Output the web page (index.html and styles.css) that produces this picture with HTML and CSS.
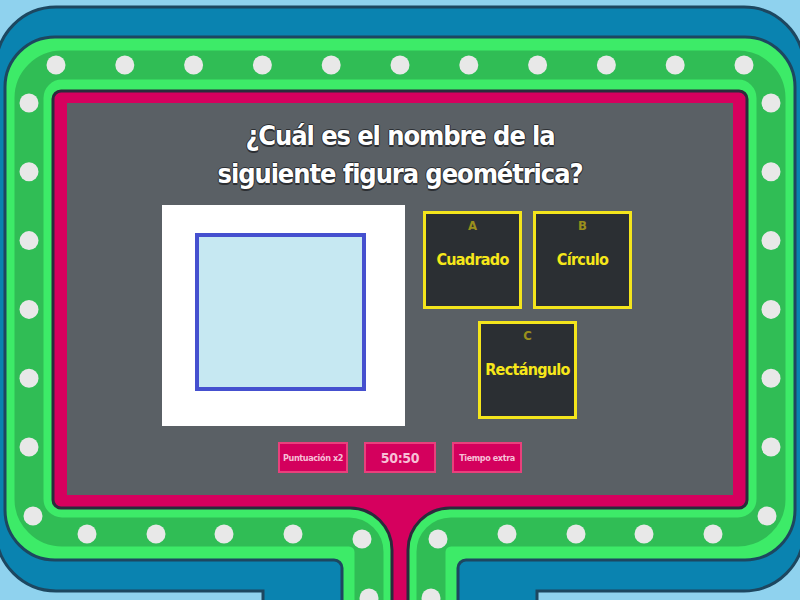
FILE: index.html
```html
<!DOCTYPE html>
<html lang="es">
<head>
<meta charset="utf-8">
<title>Quiz</title>
<link rel="stylesheet" href="styles.css">
</head>
<body>
<div class="stage">
  <svg class="backdrop" width="800" height="600" viewBox="0 0 800 600" aria-hidden="true">
    <rect x="0" y="0" width="800" height="600" fill="#8fd2ee"/>
    <path d="M56,7 H744 A60 60 0 0 1 804,67 V531 A60 60 0 0 1 744,591 H537 V610 H263 V591 H56 A60 60 0 0 1 -4,531 V67 A60 60 0 0 1 56,7 Z" fill="#0a83b0" stroke="#1d4760" stroke-width="3"/>
    <path d="M55,37 H745 A50 50 0 0 1 795,87 V510 A50 50 0 0 1 745,560 H466 A8 8 0 0 0 458,568 V610 H342 V568 A8 8 0 0 0 334,560 H55 A50 50 0 0 1 5,510 V87 A50 50 0 0 1 55,37 Z" fill="#3deb68" stroke="#1d4760" stroke-width="3"/>
    <path d="M369,610 V552 A20 20 0 0 0 349,532 H62 A33 33 0 0 1 29,499 V98 A33 33 0 0 1 62,65 H738 A33 33 0 0 1 771,98 V499 A33 33 0 0 1 738,532 H451 A20 20 0 0 0 431,552 V610" fill="none" stroke="#30bd55" stroke-width="29"/>
    <g fill="#e8e8e8">
      <circle cx="56" cy="65" r="9.5"/><circle cx="124.8" cy="65" r="9.5"/><circle cx="193.6" cy="65" r="9.5"/><circle cx="262.4" cy="65" r="9.5"/><circle cx="331.2" cy="65" r="9.5"/><circle cx="400" cy="65" r="9.5"/><circle cx="468.8" cy="65" r="9.5"/><circle cx="537.6" cy="65" r="9.5"/><circle cx="606.4" cy="65" r="9.5"/><circle cx="675.2" cy="65" r="9.5"/><circle cx="744" cy="65" r="9.5"/>
      <circle cx="29" cy="103" r="9.5"/><circle cx="29" cy="171.8" r="9.5"/><circle cx="29" cy="240.6" r="9.5"/><circle cx="29" cy="309.4" r="9.5"/><circle cx="29" cy="378.2" r="9.5"/><circle cx="29" cy="447" r="9.5"/><circle cx="33" cy="516" r="9.5"/>
      <circle cx="771" cy="103" r="9.5"/><circle cx="771" cy="171.8" r="9.5"/><circle cx="771" cy="240.6" r="9.5"/><circle cx="771" cy="309.4" r="9.5"/><circle cx="771" cy="378.2" r="9.5"/><circle cx="771" cy="447" r="9.5"/><circle cx="767" cy="516" r="9.5"/>
      <circle cx="87" cy="534" r="9.5"/><circle cx="156" cy="534" r="9.5"/><circle cx="224" cy="534" r="9.5"/><circle cx="293" cy="534" r="9.5"/><circle cx="362" cy="539" r="9.5"/><circle cx="369" cy="598" r="9.5"/>
      <circle cx="507" cy="534" r="9.5"/><circle cx="576" cy="534" r="9.5"/><circle cx="644" cy="534" r="9.5"/><circle cx="713" cy="534" r="9.5"/><circle cx="438" cy="539" r="9.5"/><circle cx="431" cy="598" r="9.5"/>
    </g>
    <path d="M61,91 H739 A8 8 0 0 1 747,99 V500 A8 8 0 0 1 739,508 H450 A42 42 0 0 0 408,550 V610 H392 V550 A42 42 0 0 0 350,508 H61 A8 8 0 0 1 53,500 V99 A8 8 0 0 1 61,91 Z" fill="#d6005e" stroke="#2b2b3c" stroke-width="3"/>
  </svg>

  <main class="frame">
    <section class="screen">
      <h1 class="question">¿Cuál es el nombre de la<br>siguiente figura geométrica?</h1>
      <div class="content">
        <div class="picture">
          <div class="square"></div>
        </div>
        <div class="answers">
          <div class="answer-row">
            <div class="card"><span class="letter">A</span><span class="label">Cuadrado</span></div>
            <div class="card"><span class="letter">B</span><span class="label">Círculo</span></div>
          </div>
          <div class="answer-row">
            <div class="card"><span class="letter">C</span><span class="label">Rectángulo</span></div>
          </div>
        </div>
      </div>
      <div class="powerups">
        <div class="power small">Puntuación x2</div>
        <div class="power big">50:50</div>
        <div class="power small">Tiempo extra</div>
      </div>
    </section>
  </main>
</div>
</body>
</html>
```

FILE: styles.css
```css
html, body {
  margin: 0;
  padding: 0;
}

body {
  width: 800px;
  height: 600px;
  overflow: hidden;
  background: #8fd2ee;
  font-family: "DejaVu Sans Condensed", "DejaVu Sans", "Liberation Sans", sans-serif;
  font-stretch: condensed;
}

.stage {
  position: relative;
  width: 800px;
  height: 600px;
}

.backdrop {
  position: absolute;
  top: 0;
  left: 0;
  display: block;
}

.frame {
  position: relative;
  padding: 103px 67px 0 67px;
}

.screen {
  width: 666px;
  height: 392px;
  background: #5a6065;
  display: flex;
  flex-direction: column;
  align-items: center;
  box-sizing: border-box;
  padding-top: 14px;
}

.question {
  margin: 0;
  color: #ffffff;
  font-size: 27px;
  letter-spacing: -1.1px;
  line-height: 38px;
  font-weight: bold;
  text-align: center;
  text-shadow: 0 2px 0 #2c2f33, 1px 0 0 #2c2f33, -1px 0 0 #2c2f33, 0 -1px 0 #2c2f33;
}

.content {
  display: flex;
  gap: 18px;
  margin-top: 12px;
  margin-right: 6px;
}

.picture {
  width: 243px;
  height: 221px;
  background: #ffffff;
  box-sizing: border-box;
  padding: 28px 0 0 33px;
}

.square {
  width: 171px;
  height: 158px;
  box-sizing: border-box;
  background: #c6e8f2;
  border: 4px solid #4550cf;
}

.answers {
  display: flex;
  flex-direction: column;
  gap: 12px;
  padding-top: 6px;
}

.answer-row {
  display: flex;
  justify-content: center;
  gap: 11px;
}

.card {
  width: 99px;
  height: 98px;
  box-sizing: border-box;
  background: #2b2f33;
  border: 3px solid #f4e51c;
  display: flex;
  flex-direction: column;
  align-items: center;
}

.letter {
  color: #9a8f1c;
  font-size: 13px;
  font-weight: bold;
  line-height: 16px;
  margin-top: 4px;
}

.label {
  color: #f6e71a;
  font-size: 16px;
  letter-spacing: -0.7px;
  font-weight: bold;
  line-height: 20px;
  margin-top: 16px;
  white-space: nowrap;
}

.powerups {
  display: flex;
  gap: 16px;
  margin-top: 16px;
}

.power {
  width: 70px;
  height: 31px;
  box-sizing: border-box;
  background: #d4005d;
  border: 2px solid #e9407c;
  color: #f7bfd6;
  font-weight: bold;
  display: flex;
  align-items: center;
  justify-content: center;
  white-space: nowrap;
}

.power.small {
  font-size: 9px;
  letter-spacing: -0.4px;
}

.power.big {
  width: 72px;
  font-size: 14px;
  letter-spacing: -0.3px;
}
```
